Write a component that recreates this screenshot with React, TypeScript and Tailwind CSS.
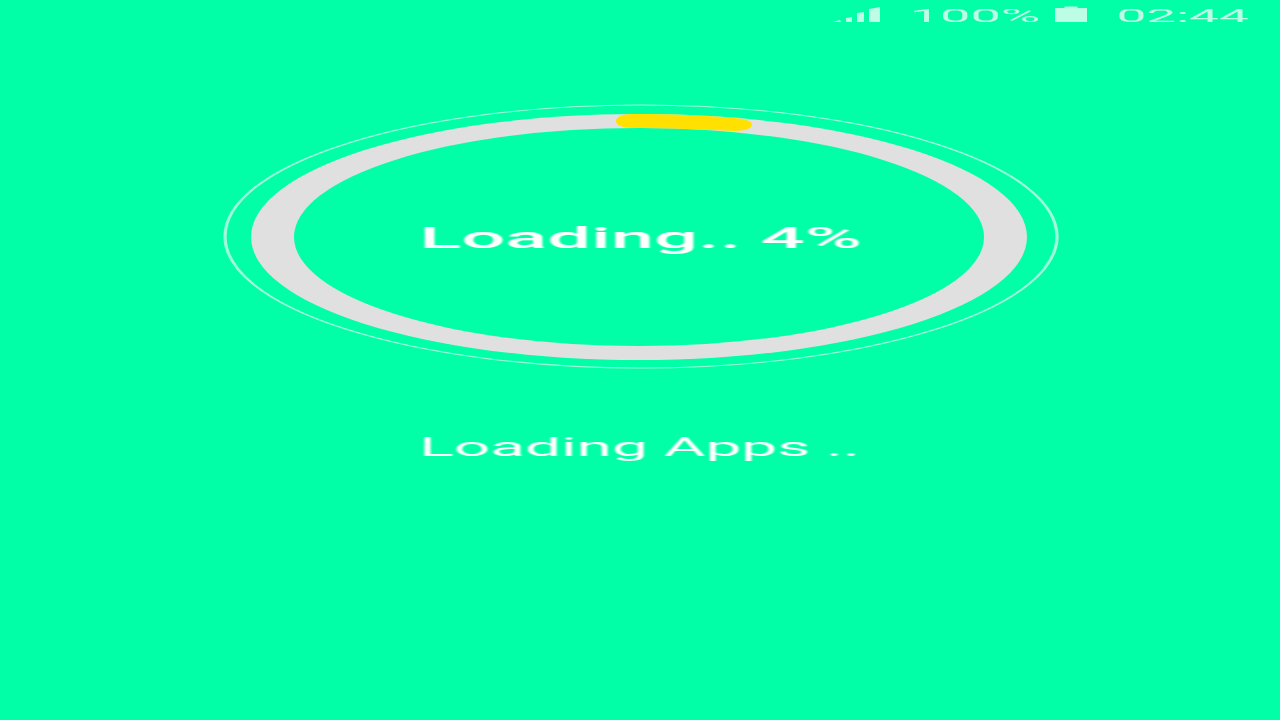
export default function App() {
  return (
    <div className="w-[1280px] h-[720px] overflow-hidden bg-[#00ffa6] text-white flex flex-col font-['Roboto',sans-serif]">
      {/* Status bar */}
      <div className="h-[30px] pr-[32px] flex justify-end items-start pt-[6px] text-[#bdfde6] blur-[0.6px]">
        <svg width="50" height="16" viewBox="0 0 50 16" className="mr-[30px]" fill="currentColor">
          <polygon points="1,16 9,14 10,16" />
          <polygon points="15,16 15,12 21,11 21,16" />
          <polygon points="26,16 26,7 33,6 33,16" />
          <polygon points="38,16 38,3 49,1 49,16" />
        </svg>
        <div className="w-[128px] h-[18px] flex items-center justify-center">
          <span className="text-[19px] leading-none whitespace-nowrap scale-x-[2.84]">100%</span>
        </div>
        <svg width="34" height="16" viewBox="0 0 34 16" className="ml-[15px] mr-[29px]" fill="currentColor">
          <path d="M1 2h9.500V0.500h13V2h9.500v14H1z" />
        </svg>
        <div className="w-[131px] h-[18px] flex items-center justify-center">
          <span className="text-[19px] leading-none whitespace-nowrap scale-x-[2.8]">02:44</span>
        </div>
      </div>

      {/* Progress ring */}
      <div className="relative ml-[222px] mt-[72px] w-[840px] h-[270px]">
        <svg width="840" height="270" viewBox="222 102 840 270" className="blur-[0.4px]">
          <g transform="translate(641 236.5) scale(4.16 1.315)">
            <circle r="100" fill="none" stroke="#9ffada" strokeWidth="0.8" />
          </g>
          <ellipse cx="639" cy="237" rx="388" ry="123" fill="#e0e0e0" />
          <ellipse cx="639" cy="237" rx="345" ry="109" fill="#00ffa6" />
          <path
            d="M632 114 C670 114 705 115.500 735 118 C746 119 752 121.500 752 124.500 C752 128 746 131 735 131 C705 129.500 670 128 632 128 C622 128 616 125 616 121 C616 117 622 114 632 114 Z"
            fill="#ffe000"
          />
        </svg>
        <div className="absolute inset-0 flex items-center justify-center pt-[2px] pr-[3px]">
          <span className="text-[29px] font-medium leading-none whitespace-nowrap scale-x-[2.68] blur-[0.4px]">Loading.. 4%</span>
        </div>
      </div>

      {/* Caption */}
      <div className="mt-[60px] flex justify-center">
        <span className="text-[26px] leading-[30px] whitespace-nowrap scale-x-[2.46] blur-[0.4px]">Loading Apps ..</span>
      </div>
    </div>
  )
}
